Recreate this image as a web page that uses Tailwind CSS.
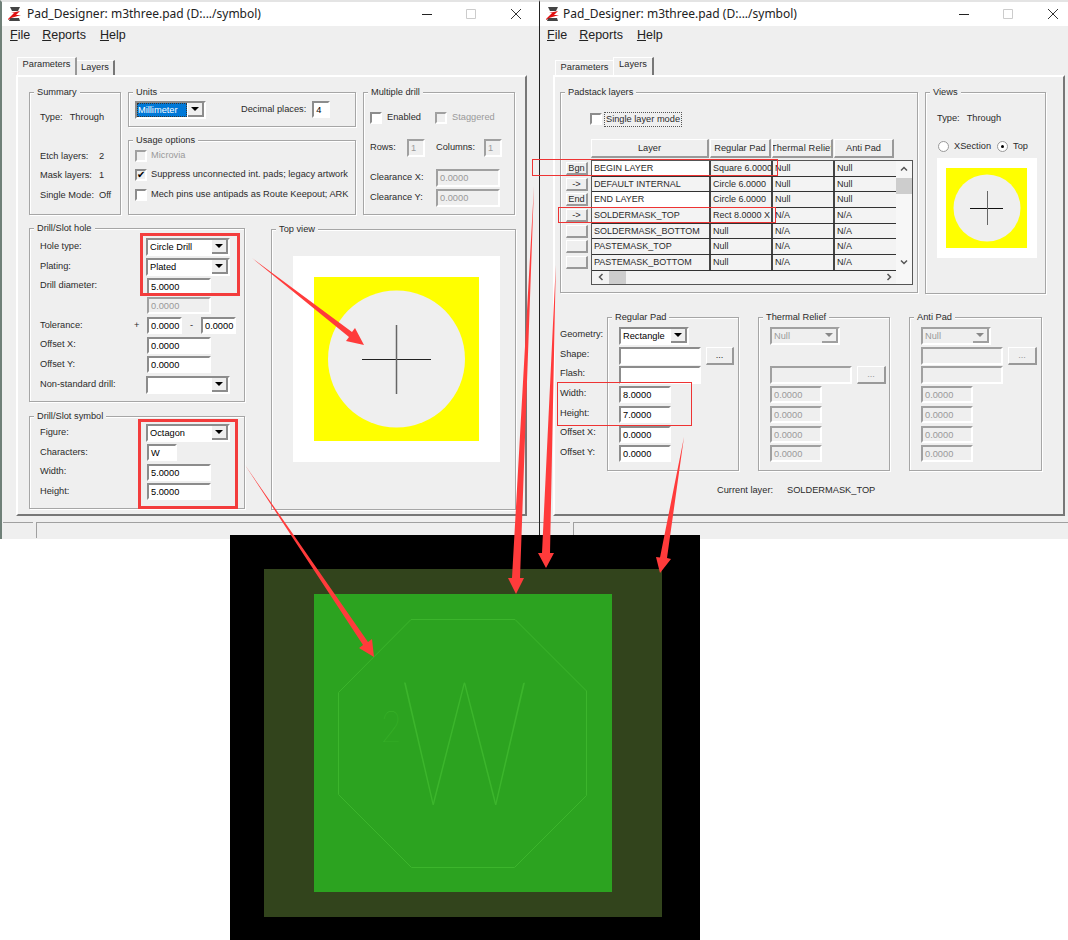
<!DOCTYPE html>
<html lang="en">
<head>
    <meta charset="UTF-8">
    <title>Pad_Designer</title>
    <script src="https://cdn.jsdelivr.net/npm/@tailwindcss/browser@4"></script>
</head>
<body class="bg-white">
<div class="relative w-[1068px] h-[940px] overflow-hidden bg-white font-['Liberation_Sans',sans-serif] text-[9.25px] text-[#2b2b2b]">

    <!-- left window: parameters tab -->
    <div class="absolute left-0 top-0 w-[540px] h-[539px] bg-[#efefef] border-l-2 border-l-[#6f8078] border-r border-r-[#222] border-t-2 border-t-[#e4e4e4]">
        <div class="flex items-center h-[24px] bg-white pl-[5px]">
            <svg class="w-[15px] h-[15px]" viewBox="0 0 15 15"><path d="M3 0h10l-2 4H5zM3 11h9l1 3H2z" fill="#444"/><path d="M1 12l6-6H4l9-2-4 4h5l-10 3-3 2z" fill="#e01010"/></svg>
            <span class="ml-[5px] font-['Noto_Sans',sans-serif] text-[12px] text-[#222]">Pad_Designer: m3three.pad (D:.../symbol)</span>
            <svg class="ml-auto mr-[16px] w-[102px] h-[12px]" viewBox="0 0 102 12" fill="none"><path d="M1 6.500h10" stroke="#222"/><path d="M45.500 1.500h9v9h-9z" stroke="#ccc"/><path d="M90 1l10 10M100 1l-10 10" stroke="#333"/></svg>
        </div>
        <div class="flex items-center h-[19px] pl-2 text-[12.500px] text-[#222]">
            <span><u>F</u>ile</span><span class="ml-[12px]"><u>R</u>eports</span><span class="ml-[14px]"><u>H</u>elp</span>
        </div>
        <div class="flex items-end h-[30px] pl-[15px]">
            <div class="flex justify-center items-center w-[60px] h-[18px] border-t border-l border-white border-r-2 border-r-[#999] pb-[3px]">Parameters</div>
            <div class="flex justify-center items-center w-[38px] h-[15px] border-t border-white border-r-2 border-r-[#777]">Layers</div>
        </div>
        <div class="ml-[14px] w-[511px] h-[441px] pl-[11px] pt-[15px] border-2 border-white border-r-[#777] border-b-[#777]">
            <div class="flex gap-[7px]">
                <div class="relative w-[92px] h-[123px] pl-[10px] pt-[18px] border border-[#a6a6a6] shadow-[inset_1px_1px_0_#fff,1px_1px_0_#fff]">
                    <span class="absolute left-[4px] -top-[7px] bg-[#efefef] px-[3px]">Summary</span>
                    <div class="flex gap-[7px]"><span>Type:</span><span>Through</span></div>
                    <div class="flex mt-[25px]"><span class="w-[59px]">Etch layers:</span><span>2</span></div>
                    <div class="flex mt-[5.600px]"><span class="w-[59px]">Mask layers:</span><span>1</span></div>
                    <div class="flex mt-[5.600px]"><span class="w-[59px]">Single Mode:</span><span>Off</span></div>
                </div>
                <div class="flex flex-col gap-[13px] w-[228px]">
                    <div class="relative flex items-center h-[35px] pl-[6px] border border-[#a6a6a6] shadow-[inset_1px_1px_0_#fff,1px_1px_0_#fff]">
                        <span class="absolute left-[4px] -top-[7px] bg-[#efefef] px-[3px]">Units</span>
                        <div class="flex w-[71px] h-[18px] border-2 border-[#8c8c8c] border-r-white border-b-white bg-white">
                            <span class="flex-1 mr-px bg-[#0078d7] text-white pl-px outline-1 outline-dotted outline-[#333] -outline-offset-1 leading-[14px]">Millimeter</span>
                            <span class="flex items-center justify-center w-[16px] bg-[#efefef] border-r-2 border-b-2 border-[#8c8c8c]"><i class="border-x-[4px] border-t-[4px] border-x-transparent border-t-black"></i></span>
                        </div>
                        <span class="ml-[35px]">Decimal places:</span>
                        <div class="ml-[6px] w-[18px] h-[17px] border-2 border-[#8c8c8c] border-r-white border-b-white bg-white pl-[2px] leading-[14px] text-black">4</div>
                    </div>
                    <div class="relative h-[75px] pl-[6px] pt-[9px] border border-[#a6a6a6] shadow-[inset_1px_1px_0_#fff,1px_1px_0_#fff]">
                        <span class="absolute left-[4px] -top-[7px] bg-[#efefef] px-[3px]">Usage options</span>
                        <div class="flex items-center h-[12px] gap-[4px] text-[#9a9a9a]"><i class="w-[12px] h-[12px] border-2 border-[#a0a0a0] border-r-white border-b-white"></i><span>Microvia</span></div>
                        <div class="flex items-center h-[12px] gap-[4px] mt-[7px]"><span class="flex items-center justify-center w-[12px] h-[12px] border-2 border-[#8c8c8c] border-r-white border-b-white text-[10px] leading-none text-black">✔</span><span>Suppress unconnected int. pads; legacy artwork</span></div>
                        <div class="flex items-center h-[12px] gap-[4px] mt-[8px]"><i class="w-[12px] h-[12px] bg-white border-2 border-[#8c8c8c] border-r-white border-b-white"></i><span>Mech pins use antipads as Route Keepout; ARK</span></div>
                    </div>
                </div>
                <div class="relative w-[152px] h-[123px] pl-[6px] pt-[19px] border border-[#a6a6a6] shadow-[inset_1px_1px_0_#fff,1px_1px_0_#fff]">
                    <span class="absolute left-[4px] -top-[7px] bg-[#efefef] px-[3px]">Multiple drill</span>
                    <div class="flex items-center h-[12px]"><i class="w-[12px] h-[12px] bg-white border-2 border-[#8c8c8c] border-r-white border-b-white"></i><span class="ml-[5px] w-[48px]">Enabled</span><i class="w-[12px] h-[12px] border-2 border-[#a0a0a0] border-r-white border-b-white"></i><span class="ml-[5px] text-[#9a9a9a]">Staggered</span></div>
                    <div class="flex items-center h-[18px] mt-[15px]"><span class="w-[37px]">Rows:</span><div class="w-[18px] h-[18px] border-2 border-[#a0a0a0] border-r-white border-b-white pl-[2px] leading-[14px] text-[#9a9a9a]">1</div><span class="ml-[11px] w-[48px]">Columns:</span><div class="w-[18px] h-[18px] border-2 border-[#a0a0a0] border-r-white border-b-white pl-[2px] leading-[14px] text-[#9a9a9a]">1</div></div>
                    <div class="flex items-center h-[18px] mt-[12px]"><span class="w-[66px]">Clearance X:</span><div class="w-[64px] h-[18px] border-2 border-[#a0a0a0] border-r-white border-b-white pl-[2px] leading-[14px] text-[#9a9a9a]">0.0000</div></div>
                    <div class="flex items-center h-[18px] mt-[2px]"><span class="w-[66px]">Clearance Y:</span><div class="w-[64px] h-[18px] border-2 border-[#a0a0a0] border-r-white border-b-white pl-[2px] leading-[14px] text-[#9a9a9a]">0.0000</div></div>
                </div>
            </div>
            <div class="flex gap-[26px] mt-[13px]">
                <div class="flex flex-col gap-[14px] w-[216px]">
                    <div class="relative h-[174px] pl-[10px] pt-[8px] border border-[#a6a6a6] shadow-[inset_1px_1px_0_#fff,1px_1px_0_#fff]">
                        <span class="absolute left-[4px] -top-[7px] bg-[#efefef] px-[3px]">Drill/Slot hole</span>
                        <div class="flex items-center h-[19.700px]"><span class="w-[106px]">Hole type:</span><div class="flex w-[84px] h-[18px] border-2 border-[#8c8c8c] border-r-white border-b-white bg-white"><span class="flex-1 pl-[2px] leading-[14px] text-black">Circle Drill</span><span class="flex items-center justify-center w-[16px] bg-[#efefef] border-r-2 border-b-2 border-[#8c8c8c]"><i class="border-x-[4px] border-t-[4px] border-x-transparent border-t-black"></i></span></div></div>
                        <div class="flex items-center h-[19.700px]"><span class="w-[106px]">Plating:</span><div class="flex w-[84px] h-[18px] border-2 border-[#8c8c8c] border-r-white border-b-white bg-white"><span class="flex-1 pl-[2px] leading-[14px] text-black">Plated</span><span class="flex items-center justify-center w-[16px] bg-[#efefef] border-r-2 border-b-2 border-[#8c8c8c]"><i class="border-x-[4px] border-t-[4px] border-x-transparent border-t-black"></i></span></div></div>
                        <div class="flex items-center h-[19.700px]"><span class="w-[107px]">Drill diameter:</span><div class="w-[64px] h-[17px] border-2 border-[#8c8c8c] border-r-white border-b-white bg-white pl-[2px] leading-[14px] text-black">5.0000</div></div>
                        <div class="flex items-center h-[19.700px]"><span class="w-[107px]"></span><div class="w-[64px] h-[17px] border-2 border-[#a0a0a0] border-r-white border-b-white pl-[2px] leading-[14px] text-[#9a9a9a]">0.0000</div></div>
                        <div class="flex items-center h-[19.700px]"><span class="w-[94px]">Tolerance:</span><span class="w-[13px]">+</span><div class="w-[35px] h-[17px] border-2 border-[#8c8c8c] border-r-white border-b-white bg-white pl-[2px] leading-[14px] text-black">0.0000</div><span class="w-[19px] text-center">-</span><div class="w-[35px] h-[17px] border-2 border-[#8c8c8c] border-r-white border-b-white bg-white pl-[2px] leading-[14px] text-black">0.0000</div></div>
                        <div class="flex items-center h-[19.700px]"><span class="w-[107px]">Offset X:</span><div class="w-[64px] h-[17px] border-2 border-[#8c8c8c] border-r-white border-b-white bg-white pl-[2px] leading-[14px] text-black">0.0000</div></div>
                        <div class="flex items-center h-[19.700px]"><span class="w-[107px]">Offset Y:</span><div class="w-[64px] h-[17px] border-2 border-[#8c8c8c] border-r-white border-b-white bg-white pl-[2px] leading-[14px] text-black">0.0000</div></div>
                        <div class="flex items-center h-[19.700px]"><span class="w-[106px]">Non-standard drill:</span><div class="flex w-[84px] h-[18px] border-2 border-[#8c8c8c] border-r-white border-b-white bg-white"><span class="flex-1"></span><span class="flex items-center justify-center w-[16px] bg-[#efefef] border-r-2 border-b-2 border-[#8c8c8c]"><i class="border-x-[4px] border-t-[4px] border-x-transparent border-t-black"></i></span></div></div>
                    </div>
                    <div class="relative h-[93px] pl-[10px] pt-[6px] border border-[#a6a6a6] shadow-[inset_1px_1px_0_#fff,1px_1px_0_#fff]">
                        <span class="absolute left-[4px] -top-[7px] bg-[#efefef] px-[3px]">Drill/Slot symbol</span>
                        <div class="flex items-center h-[19.700px]"><span class="w-[106px]">Figure:</span><div class="flex w-[84px] h-[18px] border-2 border-[#8c8c8c] border-r-white border-b-white bg-white"><span class="flex-1 pl-[2px] leading-[14px] text-black">Octagon</span><span class="flex items-center justify-center w-[16px] bg-[#efefef] border-r-2 border-b-2 border-[#8c8c8c]"><i class="border-x-[4px] border-t-[4px] border-x-transparent border-t-black"></i></span></div></div>
                        <div class="flex items-center h-[19.700px]"><span class="w-[107px]">Characters:</span><div class="w-[30px] h-[17px] border-2 border-[#8c8c8c] border-r-white border-b-white bg-white pl-[2px] leading-[14px] text-black">W</div></div>
                        <div class="flex items-center h-[19.700px]"><span class="w-[107px]">Width:</span><div class="w-[64px] h-[17px] border-2 border-[#8c8c8c] border-r-white border-b-white bg-white pl-[2px] leading-[14px] text-black">5.0000</div></div>
                        <div class="flex items-center h-[19.700px]"><span class="w-[107px]">Height:</span><div class="w-[64px] h-[17px] border-2 border-[#8c8c8c] border-r-white border-b-white bg-white pl-[2px] leading-[14px] text-black">5.0000</div></div>
                    </div>
                </div>
                <div class="relative w-[245px] h-[281px] mt-px pl-[21px] pt-[26px] border border-[#a6a6a6] shadow-[inset_1px_1px_0_#fff,1px_1px_0_#fff]">
                    <span class="absolute left-[4px] -top-[7px] bg-[#efefef] px-[3px]">Top view</span>
                    <svg class="w-[207px] h-[206px]" viewBox="0 0 207 206"><rect width="207" height="206" fill="#fff"/><rect x="21" y="21" width="165" height="164" fill="#ff0"/><circle cx="103.500" cy="103" r="68.500" fill="#efefef"/><path d="M69 103.500h69" stroke="#222"/><path d="M103.500 69v69" stroke="#666" stroke-width="1.500"/></svg>
                </div>
            </div>
        </div>
        <div class="flex gap-[3px] h-[16px] mt-[6px] pl-px">
            <div class="w-[30px] border-t border-[#a0a0a0]"></div>
            <div class="flex-1 border-t border-l border-[#a0a0a0]"></div>
        </div>
    </div>

    <!-- right window: layers tab -->
    <div class="absolute left-[540px] top-0 w-[528px] h-[539px] bg-[#efefef] border-t-2 border-t-[#e4e4e4]">
        <div class="flex items-center h-[24px] bg-white pl-[5px]">
            <svg class="w-[15px] h-[15px]" viewBox="0 0 15 15"><path d="M3 0h10l-2 4H5zM3 11h9l1 3H2z" fill="#444"/><path d="M1 12l6-6H4l9-2-4 4h5l-10 3-3 2z" fill="#e01010"/></svg>
            <span class="ml-[3px] font-['Noto_Sans',sans-serif] text-[12px] text-[#222]">Pad_Designer: m3three.pad (D:.../symbol)</span>
            <svg class="ml-auto mr-[8px] w-[102px] h-[12px]" viewBox="0 0 102 12" fill="none"><path d="M1 6.500h10" stroke="#222"/><path d="M45.500 1.500h9v9h-9z" stroke="#ccc"/><path d="M90 1l10 10M100 1l-10 10" stroke="#333"/></svg>
        </div>
        <div class="flex items-center h-[19px] pl-[7px] text-[12.500px] text-[#222]">
            <span><u>F</u>ile</span><span class="ml-[12px]"><u>R</u>eports</span><span class="ml-[14px]"><u>H</u>elp</span>
        </div>
        <div class="flex items-end h-[30px] pl-[15px]">
            <div class="flex justify-center items-center w-[58px] h-[15px] border-t border-l border-white">Parameters</div>
            <div class="flex justify-center items-center w-[41px] h-[18px] border-t border-l border-white border-r-2 border-r-[#777] pb-[3px]">Layers</div>
        </div>
        <div class="ml-[13px] w-[512px] h-[441px] pl-[5px] pt-[15px] border-2 border-white border-r-[#777] border-b-[#777]">
            <div class="flex gap-[7px]">
                <div class="relative w-[358px] h-[201px] pl-[5px] pt-[19px] border border-[#a6a6a6] shadow-[inset_1px_1px_0_#fff,1px_1px_0_#fff]">
                    <span class="absolute left-[4px] -top-[7px] bg-[#efefef] px-[3px]">Padstack layers</span>
                    <div class="flex items-center h-[14px] ml-[24px]"><i class="w-[12px] h-[12px] bg-white border-2 border-[#8c8c8c] border-r-white border-b-white"></i><span class="ml-[3px] px-px leading-[13px] outline-1 outline-dotted outline-[#555]">Single layer mode</span></div>
                    <div class="flex h-[19px] mt-[13px] ml-[25px] gap-px text-center leading-[17px]">
                        <span class="w-[118px] bg-[#efefef] border-t border-l border-white border-r-2 border-b-2 border-r-[#999] border-b-[#999]">Layer</span>
                        <span class="w-[61px] bg-[#efefef] border-t border-l border-white border-r-2 border-b-2 border-r-[#999] border-b-[#999]">Regular Pad</span>
                        <span class="flex justify-center w-[61px] overflow-hidden whitespace-nowrap bg-[#efefef] border-t border-l border-white border-r-2 border-b-2 border-r-[#999] border-b-[#999] tracking-[0.15px]"><span class="shrink-0">Thermal Relief</span></span>
                        <span class="w-[60px] bg-[#efefef] border-t border-l border-white border-r-2 border-b-2 border-r-[#999] border-b-[#999]">Anti Pad</span>
                    </div>
                    <div class="flex gap-[3px] mt-[2px]">
                        <div class="flex flex-col w-[22px] pt-[2px] gap-[2.700px] text-center leading-[11px]">
                            <span class="h-[13px] border-t border-l border-white border-r-2 border-b-2 border-r-[#999] border-b-[#999]">Bgn</span>
                            <span class="h-[13px] border-t border-l border-white border-r-2 border-b-2 border-r-[#999] border-b-[#999]">-&gt;</span>
                            <span class="h-[13px] border-t border-l border-white border-r-2 border-b-2 border-r-[#999] border-b-[#999]">End</span>
                            <span class="h-[13px] border-t border-l border-white border-r-2 border-b-2 border-r-[#999] border-b-[#999]">-&gt;</span>
                            <span class="h-[13px] border-t border-l border-white border-r-2 border-b-2 border-r-[#999] border-b-[#999]"></span>
                            <span class="h-[13px] border-t border-l border-white border-r-2 border-b-2 border-r-[#999] border-b-[#999]"></span>
                            <span class="h-[13px] border-t border-l border-white border-r-2 border-b-2 border-r-[#999] border-b-[#999]"></span>
                        </div>
                        <div class="flex w-[322px] h-[125px] border border-[#555] bg-[#f3f3f3] text-[9px]">
                            <div class="w-[304px]">
                                <div class="flex h-[15.700px] border-b border-[#333]"><span class="w-[119px] bg-white pl-[2px] border-r-2 border-[#444] leading-[14px]">BEGIN LAYER</span><span class="w-[62px] pl-[2px] border-r-2 border-[#444] leading-[14px] overflow-hidden whitespace-nowrap">Square 6.0000</span><span class="w-[62px] pl-[2px] border-r-2 border-[#444] leading-[14px]">Null</span><span class="flex-1 pl-[2px] leading-[14px]">Null</span></div>
                                <div class="flex h-[15.700px] border-b border-[#333]"><span class="w-[119px] pl-[2px] border-r-2 border-[#444] leading-[14px]">DEFAULT INTERNAL</span><span class="w-[62px] pl-[2px] border-r-2 border-[#444] leading-[14px]">Circle 6.0000</span><span class="w-[62px] pl-[2px] border-r-2 border-[#444] leading-[14px]">Null</span><span class="flex-1 pl-[2px] leading-[14px]">Null</span></div>
                                <div class="flex h-[15.700px] border-b border-[#333]"><span class="w-[119px] bg-white pl-[2px] border-r-2 border-[#444] leading-[14px]">END LAYER</span><span class="w-[62px] pl-[2px] border-r-2 border-[#444] leading-[14px]">Circle 6.0000</span><span class="w-[62px] pl-[2px] border-r-2 border-[#444] leading-[14px]">Null</span><span class="flex-1 pl-[2px] leading-[14px]">Null</span></div>
                                <div class="flex h-[15.700px] border-b border-[#333]"><span class="w-[119px] pl-[2px] border-r-2 border-[#444] leading-[14px]">SOLDERMASK_TOP</span><span class="w-[62px] pl-[2px] border-r-2 border-[#444] leading-[14px] overflow-hidden whitespace-nowrap">Rect 8.0000 X</span><span class="w-[62px] pl-[2px] border-r-2 border-[#444] leading-[14px]">N/A</span><span class="flex-1 pl-[2px] leading-[14px]">N/A</span></div>
                                <div class="flex h-[15.700px] border-b border-[#333]"><span class="w-[119px] pl-[2px] border-r-2 border-[#444] leading-[14px]">SOLDERMASK_BOTTOM</span><span class="w-[62px] pl-[2px] border-r-2 border-[#444] leading-[14px]">Null</span><span class="w-[62px] pl-[2px] border-r-2 border-[#444] leading-[14px]">N/A</span><span class="flex-1 pl-[2px] leading-[14px]">N/A</span></div>
                                <div class="flex h-[15.700px] border-b border-[#333]"><span class="w-[119px] pl-[2px] border-r-2 border-[#444] leading-[14px]">PASTEMASK_TOP</span><span class="w-[62px] pl-[2px] border-r-2 border-[#444] leading-[14px]">Null</span><span class="w-[62px] pl-[2px] border-r-2 border-[#444] leading-[14px]">N/A</span><span class="flex-1 pl-[2px] leading-[14px]">N/A</span></div>
                                <div class="flex h-[15.700px] border-b border-[#333]"><span class="w-[119px] pl-[2px] border-r-2 border-[#444] leading-[14px]">PASTEMASK_BOTTOM</span><span class="w-[62px] pl-[2px] border-r-2 border-[#444] leading-[14px]">Null</span><span class="w-[62px] pl-[2px] border-r-2 border-[#444] leading-[14px]">N/A</span><span class="flex-1 pl-[2px] leading-[14px]">N/A</span></div>
                                <div class="flex items-center h-[13px] pl-[5px]">
                                    <svg class="w-[8px] h-[8px]" viewBox="0 0 8 8" fill="none"><path d="M5.500 1L2.500 4l3 3" stroke="#555" stroke-width="1.500"/></svg>
                                    <i class="ml-[4px] w-[17px] h-[13px] bg-[#cdcdcd]"></i>
                                    <svg class="ml-auto mr-[3px] w-[8px] h-[8px]" viewBox="0 0 8 8" fill="none"><path d="M2.500 1l3 3-3 3" stroke="#555" stroke-width="1.500"/></svg>
                                </div>
                            </div>
                            <div class="flex flex-col items-center w-[16px] bg-[#f7f7f7] pt-[4px]">
                                <svg class="w-[8px] h-[8px]" viewBox="0 0 8 8" fill="none"><path d="M1 5.500L4 2.500l3 3" stroke="#555" stroke-width="1.500"/></svg>
                                <i class="mt-[5px] w-[16px] h-[16px] bg-[#cdcdcd]"></i>
                                <svg class="mt-[64px] w-[8px] h-[8px]" viewBox="0 0 8 8" fill="none"><path d="M1 2.500l3 3 3-3" stroke="#555" stroke-width="1.500"/></svg>
                            </div>
                        </div>
                    </div>
                </div>
                <div class="relative w-[121px] h-[202px] pl-[11px] pt-[19px] border border-[#a6a6a6] shadow-[inset_1px_1px_0_#fff,1px_1px_0_#fff]">
                    <span class="absolute left-[4px] -top-[7px] bg-[#efefef] px-[3px]">Views</span>
                    <div class="flex gap-[7px]"><span>Type:</span><span>Through</span></div>
                    <div class="flex items-center h-[12px] mt-[15px] pl-px"><i class="w-[11px] h-[11px] rounded-full bg-white border border-[#999]"></i><span class="ml-[5px] w-[39px]">XSection</span><i class="flex items-center justify-center ml-[4px] w-[11px] h-[11px] rounded-full bg-white border border-[#999]"><b class="w-[3px] h-[3px] rounded-full bg-black"></b></i><span class="ml-[5px]">Top</span></div>
                    <svg class="mt-[5px] w-[100px] h-[100px]" viewBox="0 0 100 100"><rect width="100" height="100" fill="#fff"/><rect x="9" y="10" width="81" height="80" fill="#ff0"/><circle cx="50" cy="50" r="33.500" fill="#efefef"/><path d="M33 50.500h33" stroke="#111"/><path d="M50.500 33v34" stroke="#666"/></svg>
                </div>
            </div>
            <div class="flex mt-[23px]">
                <div class="w-[47px] pt-[8px]">
                    <div class="flex items-center h-[19.700px]">Geometry:</div>
                    <div class="flex items-center h-[19.700px]">Shape:</div>
                    <div class="flex items-center h-[19.700px]">Flash:</div>
                    <div class="flex items-center h-[19.700px]">Width:</div>
                    <div class="flex items-center h-[19.700px]">Height:</div>
                    <div class="flex items-center h-[19.700px]">Offset X:</div>
                    <div class="flex items-center h-[19.700px]">Offset Y:</div>
                </div>
                <div class="flex gap-[19px]">
                    <div class="relative w-[132px] h-[154px] pl-[11px] pt-[8px] border border-[#a6a6a6] shadow-[inset_1px_1px_0_#fff,1px_1px_0_#fff]">
                        <span class="absolute left-[4px] -top-[7px] bg-[#efefef] px-[3px]">Regular Pad</span>
                        <div class="flex items-center h-[19.700px]"><div class="flex w-[70px] h-[18px] border-2 border-[#8c8c8c] border-r-white border-b-white bg-white"><span class="flex-1 pl-[2px] leading-[14px] text-black">Rectangle</span><span class="flex items-center justify-center w-[16px] bg-[#efefef] border-r-2 border-b-2 border-[#8c8c8c]"><i class="border-x-[4px] border-t-[4px] border-x-transparent border-t-black"></i></span></div></div>
                        <div class="flex items-center h-[19.700px] gap-[5px]"><div class="w-[82px] h-[18px] border-2 border-[#8c8c8c] border-r-white border-b-white bg-white"></div><span class="w-[28px] h-[18px] text-center leading-[14px] border-t border-l border-white border-r-2 border-b-2 border-r-[#999] border-b-[#999]">...</span></div>
                        <div class="flex items-center h-[19.700px]"><div class="w-[82px] h-[18px] border-2 border-[#8c8c8c] border-r-white border-b-white bg-white"></div></div>
                        <div class="flex items-center h-[19.700px]"><div class="w-[52px] h-[17px] border-2 border-[#8c8c8c] border-r-white border-b-white bg-white pl-[2px] leading-[14px] text-black">8.0000</div></div>
                        <div class="flex items-center h-[19.700px]"><div class="w-[52px] h-[17px] border-2 border-[#8c8c8c] border-r-white border-b-white bg-white pl-[2px] leading-[14px] text-black">7.0000</div></div>
                        <div class="flex items-center h-[19.700px]"><div class="w-[52px] h-[17px] border-2 border-[#8c8c8c] border-r-white border-b-white bg-white pl-[2px] leading-[14px] text-black">0.0000</div></div>
                        <div class="flex items-center h-[19.700px]"><div class="w-[52px] h-[17px] border-2 border-[#8c8c8c] border-r-white border-b-white bg-white pl-[2px] leading-[14px] text-black">0.0000</div></div>
                    </div>
                    <div class="relative w-[132px] h-[154px] pl-[11px] pt-[8px] border border-[#a6a6a6] shadow-[inset_1px_1px_0_#fff,1px_1px_0_#fff] text-[#9a9a9a]">
                        <span class="absolute left-[4px] -top-[7px] bg-[#efefef] px-[3px] text-[#2b2b2b]">Thermal Relief</span>
                        <div class="flex items-center h-[19.700px]"><div class="flex w-[70px] h-[18px] border-2 border-[#a0a0a0] border-r-white border-b-white"><span class="flex-1 pl-[2px] leading-[14px]">Null</span><span class="flex items-center justify-center w-[16px] border-r-2 border-b-2 border-[#a0a0a0]"><i class="border-x-[4px] border-t-[4px] border-x-transparent border-t-[#888]"></i></span></div></div>
                        <div class="flex items-center h-[19.700px]"></div>
                        <div class="flex items-center h-[19.700px] gap-[5px]"><div class="w-[82px] h-[18px] border-2 border-[#a0a0a0] border-r-white border-b-white"></div><span class="w-[29px] h-[18px] text-center leading-[14px] border-t border-l border-white border-r-2 border-b-2 border-r-[#999] border-b-[#999]">...</span></div>
                        <div class="flex items-center h-[19.700px]"><div class="w-[52px] h-[17px] border-2 border-[#a0a0a0] border-r-white border-b-white pl-[2px] leading-[14px]">0.0000</div></div>
                        <div class="flex items-center h-[19.700px]"><div class="w-[52px] h-[17px] border-2 border-[#a0a0a0] border-r-white border-b-white pl-[2px] leading-[14px]">0.0000</div></div>
                        <div class="flex items-center h-[19.700px]"><div class="w-[52px] h-[17px] border-2 border-[#a0a0a0] border-r-white border-b-white pl-[2px] leading-[14px]">0.0000</div></div>
                        <div class="flex items-center h-[19.700px]"><div class="w-[52px] h-[17px] border-2 border-[#a0a0a0] border-r-white border-b-white pl-[2px] leading-[14px]">0.0000</div></div>
                    </div>
                    <div class="relative w-[133px] h-[154px] pl-[11px] pt-[8px] border border-[#a6a6a6] shadow-[inset_1px_1px_0_#fff,1px_1px_0_#fff] text-[#9a9a9a]">
                        <span class="absolute left-[4px] -top-[7px] bg-[#efefef] px-[3px] text-[#2b2b2b]">Anti Pad</span>
                        <div class="flex items-center h-[19.700px]"><div class="flex w-[70px] h-[18px] border-2 border-[#a0a0a0] border-r-white border-b-white"><span class="flex-1 pl-[2px] leading-[14px]">Null</span><span class="flex items-center justify-center w-[16px] border-r-2 border-b-2 border-[#a0a0a0]"><i class="border-x-[4px] border-t-[4px] border-x-transparent border-t-[#888]"></i></span></div></div>
                        <div class="flex items-center h-[19.700px] gap-[5px]"><div class="w-[82px] h-[18px] border-2 border-[#a0a0a0] border-r-white border-b-white"></div><span class="w-[29px] h-[18px] text-center leading-[14px] border-t border-l border-white border-r-2 border-b-2 border-r-[#999] border-b-[#999]">...</span></div>
                        <div class="flex items-center h-[19.700px]"><div class="w-[82px] h-[18px] border-2 border-[#a0a0a0] border-r-white border-b-white"></div></div>
                        <div class="flex items-center h-[19.700px]"><div class="w-[52px] h-[17px] border-2 border-[#a0a0a0] border-r-white border-b-white pl-[2px] leading-[14px]">0.0000</div></div>
                        <div class="flex items-center h-[19.700px]"><div class="w-[52px] h-[17px] border-2 border-[#a0a0a0] border-r-white border-b-white pl-[2px] leading-[14px]">0.0000</div></div>
                        <div class="flex items-center h-[19.700px]"><div class="w-[52px] h-[17px] border-2 border-[#a0a0a0] border-r-white border-b-white pl-[2px] leading-[14px]">0.0000</div></div>
                        <div class="flex items-center h-[19.700px]"><div class="w-[52px] h-[17px] border-2 border-[#a0a0a0] border-r-white border-b-white pl-[2px] leading-[14px]">0.0000</div></div>
                    </div>
                </div>
            </div>
            <div class="flex mt-[13px] pl-[157px]"><span class="w-[70px]">Current layer:</span><span>SOLDERMASK_TOP</span></div>
        </div>
        <div class="flex gap-[3px] h-[16px] mt-[6px]">
            <div class="w-[30px] border-t border-[#a0a0a0]"></div>
            <div class="flex-1 border-t border-l border-[#a0a0a0]"></div>
        </div>
    </div>

    <!-- pcb view -->
    <div class="absolute left-[230px] top-[535px] w-[470px] h-[405px] bg-black pl-[34px] pt-[34px]">
        <div class="w-[398px] h-[348px] bg-[#32441c] pl-[50px] pt-[25px]">
            <div class="relative w-[298px] h-[298px] bg-[#2ca320]">
                <svg class="absolute left-0 top-0 w-[298px] h-[298px]" viewBox="0 0 298 298" fill="none" stroke="#3cb52c">
                    <path d="M97 25.500H201L272.500 97V201.500L200.500 273.500H97.500L24.500 200.500V98.500Z"/>
                </svg>
                <span class="absolute left-[86px] top-[57px] origin-top-left scale-x-[.74] font-['Lato',sans-serif] font-thin text-[174px] leading-[174px] text-[#3cb52c]">W</span>
                <span class="absolute left-[67px] top-[109px] origin-top-left scale-x-[.8] font-['Lato',sans-serif] font-thin text-[44px] leading-[44px] text-[#3cb52c]">2</span>
            </div>
        </div>
    </div>

    <!-- red annotations -->
    <svg class="absolute left-0 top-0 w-[1068px] h-[940px] pointer-events-none" viewBox="0 0 1068 940">
        <g fill="none" stroke="#f33c3c">
            <rect x="141.500" y="234.500" width="97" height="60" stroke-width="3"/>
            <rect x="139.500" y="420.500" width="97" height="87" stroke-width="3"/>
            <rect x="532.500" y="159.500" width="245" height="16" stroke="#e33"/>
            <rect x="558.500" y="207.500" width="217" height="15" stroke="#e33"/>
            <rect x="557.500" y="382.500" width="134" height="43" stroke="#e33"/>
        </g>
        <g fill="#ff3b3b">
            <polygon points="252,258 352,332 355,328 364,345 346,341 349,337"/>
            <polygon points="245,465 368,642 372,639 374,657 359,648 363,645"/>
            <polygon points="534,186 520,578 524,578 516,594 508,578 512,578"/>
            <polygon points="555.800,265 550,553 554,553 546,568 538,553 542,553"/>
            <polygon points="684,437 667,558 671,559 660,573 656,557 660,557.500"/>
        </g>
    </svg>
</div>
</body>
</html>
